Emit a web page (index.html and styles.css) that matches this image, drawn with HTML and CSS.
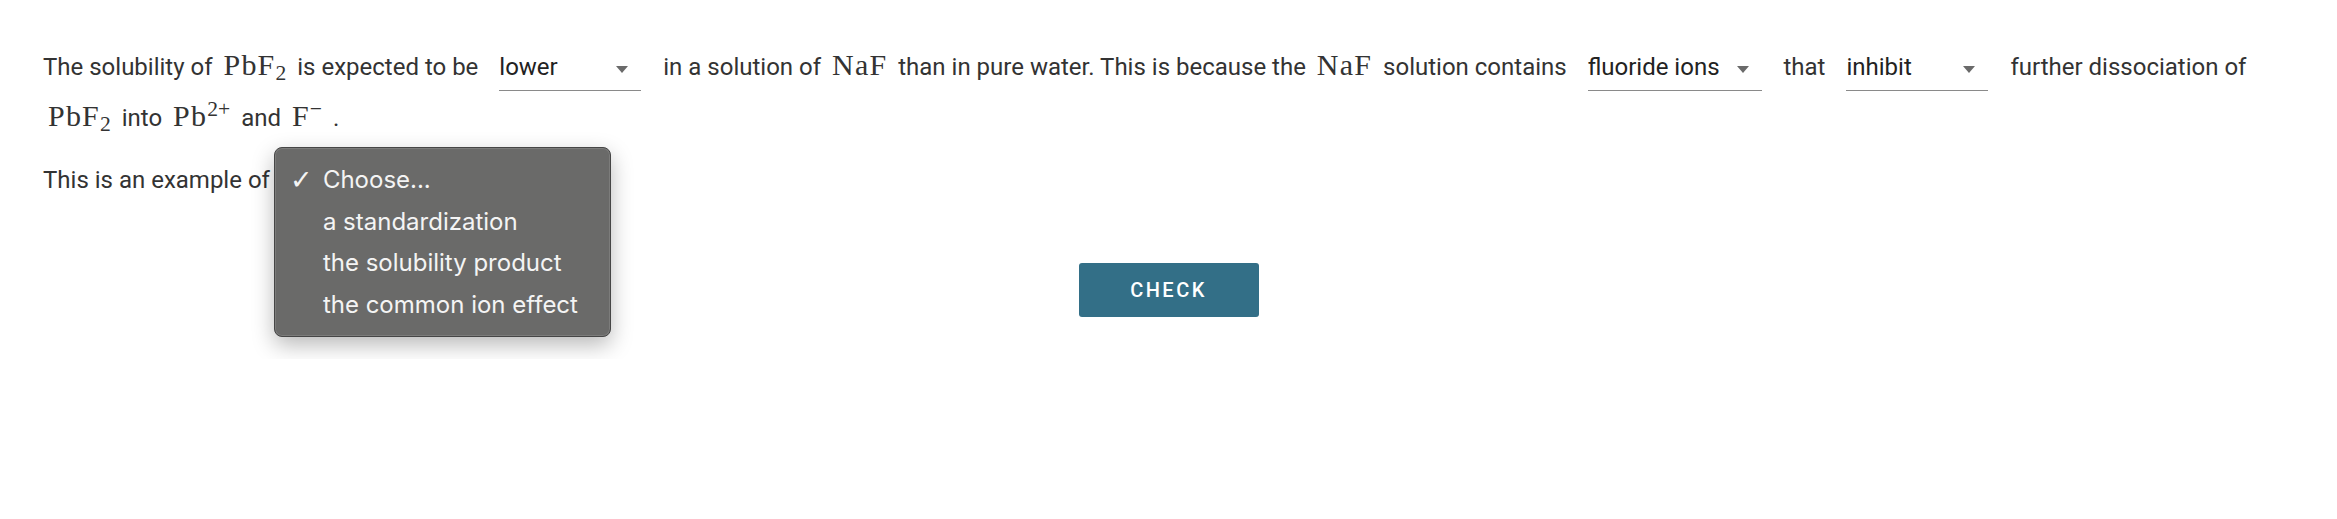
FILE: index.html
```html
<!DOCTYPE html>
<html lang="en">
<head>
  <meta charset="UTF-8">
  <title>Solubility Question</title>
  <meta name="viewport" content="width=device-width, initial-scale=1.0">
  <link rel="stylesheet" href="styles.css">
</head>
<body>

  <div class="question">
    <p class="text">
      The solubility of <span class="math">PbF<sub>2</sub></span> is expected to be
      <span class="select"><span class="select-value">lower</span><span class="caret"></span></span>
      in a solution of <span class="math">NaF</span> than in pure water. This is because the
      <span class="math">NaF</span> solution contains
      <span class="select"><span class="select-value">fluoride ions</span><span class="caret"></span></span>
      that
      <span class="select"><span class="select-value">inhibit</span><span class="caret"></span></span>
      further dissociation of <span class="math">PbF<sub>2</sub></span> into
      <span class="math">Pb<sup>2+</sup></span> and <span class="math">F<sup>&minus;</sup></span> .
    </p>

    <p class="text">
      This is an example of
      <span class="select-wrap">
        <span class="select"><span class="select-value">Choose...</span><span class="caret"></span></span>
        <!-- open native menu -->
        <span class="menu">
          <span class="menu-item selected">Choose...</span>
          <span class="menu-item">a standardization</span>
          <span class="menu-item">the solubility product</span>
          <span class="menu-item">the common ion effect</span>
        </span>
      </span>
    </p>

    <div class="actions">
      <button class="check">Check</button>
    </div>
  </div>

</body>
</html>
```

FILE: styles.css
```css
body {
  font-family: Roboto, 'Liberation Sans', sans-serif;
  background: #fff;
  color: #333;
  margin: 0;
  padding: 0;
}

.question {
  padding: 42px 43px;
}

.text {
  font-size: 24px;
  line-height: 51px;
  margin: 0 0 11px;
}

.math {
  font-family: 'Liberation Serif', serif;
  font-size: 30px;
  line-height: 1;
  letter-spacing: 0.04em;
  margin: 0 5px;
}

.math sub,
.math sup {
  font-size: 0.72em;
  line-height: 0;
  letter-spacing: 0;
}

.math sub {
  vertical-align: -0.22em;
}

.math sup {
  vertical-align: 0.45em;
}

.select {
  display: inline-flex;
  align-items: center;
  justify-content: space-between;
  gap: 17px;
  min-width: 142px;
  box-sizing: border-box;
  line-height: 28px;
  padding: 0 13px 9px 0;
  margin: 0 16px 0 15px;
  border-bottom: 1px solid #8a8a8a;
  color: #222;
}

.caret {
  width: 0;
  height: 0;
  margin-top: 4px;
  border-left: 6px solid transparent;
  border-right: 6px solid transparent;
  border-top: 7px solid #6a6a6a;
}

.select-wrap {
  position: relative;
}

.menu {
  position: absolute;
  left: -2px;
  top: -19px;
  width: 337px;
  box-sizing: border-box;
  padding: 11px 0;
  background: #6a6a69;
  border: 1px solid #464646;
  border-radius: 8px;
  box-shadow: 0 8px 22px rgba(0, 0, 0, 0.28), inset 0 0 0 1px rgba(255, 255, 255, 0.12);
  font-family: Inter, 'Noto Sans', sans-serif;
  font-size: 24px;
  line-height: 41.5px;
  color: #f4f4f4;
  z-index: 2;
}

.menu-item {
  display: block;
  position: relative;
  padding-left: 48px;
  white-space: nowrap;
}

.menu-item.selected::before {
  content: '\2713';
  position: absolute;
  left: 15px;
  font-family: 'DejaVu Sans', sans-serif;
  font-size: 27px;
  font-weight: bold;
}

.actions {
  display: flex;
  justify-content: center;
  padding-top: 46px;
}

.check {
  width: 180px;
  height: 54px;
  background: #336f87;
  color: #fff;
  border: none;
  border-radius: 3px;
  font-family: Roboto, sans-serif;
  font-weight: 500;
  font-size: 20px;
  letter-spacing: 2.5px;
  text-transform: uppercase;
  cursor: pointer;
}
```
